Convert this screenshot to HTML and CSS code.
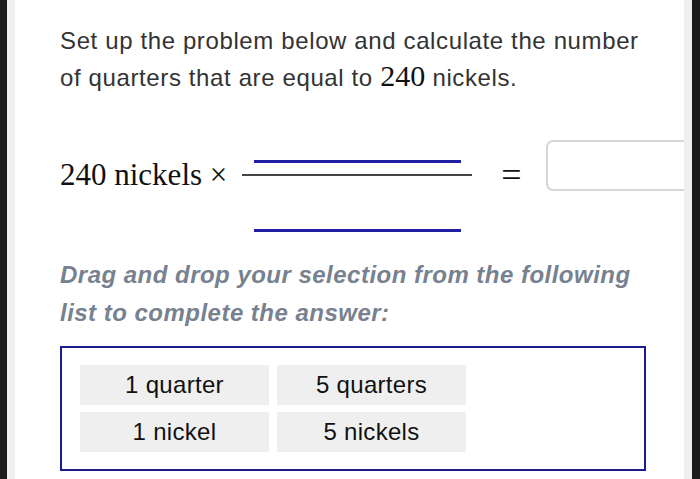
FILE: index.html
```html
<!DOCTYPE html>
<html>
<head>
<meta charset="utf-8">
<link rel="stylesheet" href="styles.css">
</head>
<body>
<div class="frame">
  <main class="content">
    <p class="prompt">Set up the problem below and calculate the number of quarters that are equal to <span class="num">240</span> nickels.</p>

    <div class="equation">
      <div class="label">240 nickels ×</div>
      <div class="fraction">
        <div class="slot slot-top"></div>
        <div class="bar"></div>
        <div class="slot slot-bottom"></div>
      </div>
      <div class="equals">=</div>
      <div class="answer"></div>
    </div>

    <p class="instruction">Drag and drop your selection from the following list to complete the answer:</p>

    <div class="choices">
      <div class="chip">1 quarter</div>
      <div class="chip">5 quarters</div>
      <div class="chip">1 nickel</div>
      <div class="chip">5 nickels</div>
    </div>
  </main>
</div>
</body>
</html>
```
FILE: styles.css
```css
html, body {
  margin: 0;
  padding: 0;
  height: 100%;
}
body {
  background: #1d1d1d;
  padding: 0 8px 0 7px;
  box-sizing: border-box;
  overflow: hidden;
}
.frame {
  background: #efefef;
  height: 100%;
  padding: 0 8px;
}
.content {
  background: #ffffff;
  height: 100%;
  overflow: hidden;
  padding: 22px 0 0 45px;
  box-sizing: border-box;
  font-family: "Liberation Sans", Arial, sans-serif;
}
.prompt {
  margin: 0;
  width: 600px;
  font-size: 24px;
  letter-spacing: 0.62px;
  line-height: 37px;
  color: #333333;
}
.num {
  font-family: "Liberation Serif", "Times New Roman", serif;
  font-size: 30px;
  letter-spacing: 0;
  line-height: 1;
  color: #111;
}
.equation {
  display: flex;
  align-items: flex-start;
  margin-top: 42px;
  height: 100px;
  font-family: "Liberation Serif", "Times New Roman", serif;
  color: #111;
}
.label {
  flex: none;
  font-size: 31px;
  line-height: 36px;
  margin-top: 19px;
  white-space: nowrap;
}
.fraction {
  flex: none;
  width: 230px;
  margin-left: 15px;
  display: flex;
  flex-direction: column;
}
.slot {
  margin: 0 11px 0 12px;
  border-bottom: 3px solid #1f1fa3;
}
.slot-top {
  height: 22px;
}
.bar {
  height: 2px;
  background: #444444;
  margin-top: 11px;
}
.slot-bottom {
  height: 53px;
}
.equals {
  flex: none;
  font-size: 36px;
  line-height: 36px;
  margin: 19px 0 0 29px;
}
.answer {
  flex: none;
  width: 160px;
  height: 47px;
  margin: 2px 0 0 24px;
  border: 2px solid #d6d6d6;
  border-radius: 7px;
}
.instruction {
  margin: 18px 0 0;
  width: 600px;
  font-size: 24px;
  letter-spacing: 0.48px;
  line-height: 38px;
  font-weight: bold;
  font-style: italic;
  color: #77818f;
}
.choices {
  margin-top: 14px;
  width: 586px;
  border: 2px solid #1c1c8c;
  padding: 17px 18px;
  box-sizing: border-box;
  display: grid;
  grid-template-columns: 189px 189px;
  column-gap: 8px;
  row-gap: 7px;
}
.chip {
  background: #efefef;
  height: 40px;
  display: flex;
  align-items: center;
  justify-content: center;
  font-size: 24px;
  letter-spacing: 0.3px;
  color: #111111;
}
```
